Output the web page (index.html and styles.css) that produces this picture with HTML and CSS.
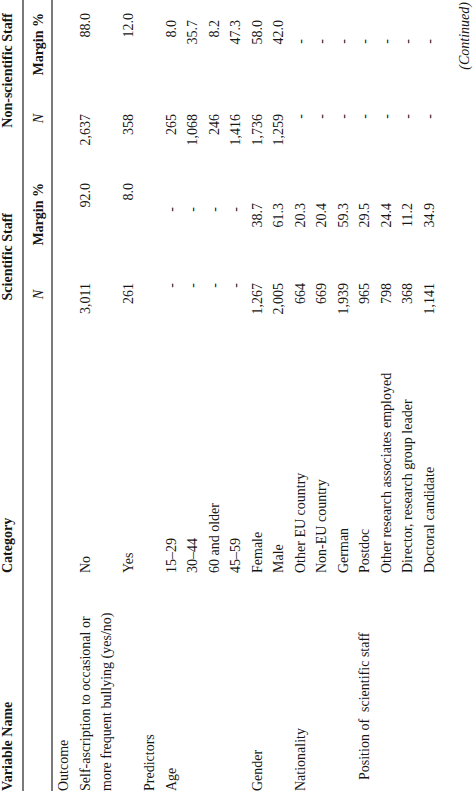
FILE: index.html
```html
<!DOCTYPE html>
<html lang="en">
<head>
<meta charset="utf-8">
<title>Table</title>
<link rel="stylesheet" href="styles.css">
</head>
<body>
<div class="page">
  <table class="tbl">
    <colgroup>
      <col class="c-var"><col class="c-cat"><col class="c-sn"><col class="c-sm"><col class="c-nn"><col class="c-nm"><col class="c-fill">
    </colgroup>
    <thead>
      <tr class="h1">
        <th class="l">Variable Name</th>
        <th class="l">Category</th>
        <th colspan="2" class="span-sci">Scientific Staff</th>
        <th colspan="2" class="span-non">Non-scientific Staff</th>
        <th></th>
      </tr>
      <tr class="h2">
        <th></th>
        <th></th>
        <th class="hn-sci"><i>N</i></th>
        <th class="r">Margin %</th>
        <th class="r"><i>N</i></th>
        <th class="r">Margin %</th>
        <th></th>
      </tr>
    </thead>
    <tbody>
      <tr><td>Outcome</td><td></td><td></td><td></td><td></td><td></td><td></td></tr>
      <tr class="o"><td>Self-ascription to occasional or<br>more frequent bullying (yes/no)</td><td>No</td><td class="n">3,011</td><td class="m">92.0</td><td class="n">2,637</td><td class="m2">88.0</td><td></td></tr>
      <tr class="o"><td></td><td>Yes</td><td class="n">261</td><td class="m">8.0</td><td class="n">358</td><td class="m2">12.0</td><td></td></tr>
      <tr><td>Predictors</td><td></td><td></td><td></td><td></td><td></td><td></td></tr>
      <tr class="p"><td>Age</td><td>15–29</td><td class="n">-</td><td class="m d">-</td><td class="n">265</td><td class="m2">8.0</td><td></td></tr>
      <tr class="p"><td></td><td>30–44</td><td class="n">-</td><td class="m d">-</td><td class="n">1,068</td><td class="m2">35.7</td><td></td></tr>
      <tr class="p"><td></td><td>60 and older</td><td class="n">-</td><td class="m d">-</td><td class="n">246</td><td class="m2">8.2</td><td></td></tr>
      <tr class="p"><td></td><td>45–59</td><td class="n">-</td><td class="m d">-</td><td class="n">1,416</td><td class="m2">47.3</td><td></td></tr>
      <tr class="p"><td>Gender</td><td>Female</td><td class="n">1,267</td><td class="m">38.7</td><td class="n">1,736</td><td class="m2">58.0</td><td></td></tr>
      <tr class="p"><td></td><td>Male</td><td class="n">2,005</td><td class="m">61.3</td><td class="n">1,259</td><td class="m2">42.0</td><td></td></tr>
      <tr class="p"><td>Nationality</td><td>Other EU country</td><td class="n">664</td><td class="m">20.3</td><td class="n">-</td><td class="m2 d">-</td><td></td></tr>
      <tr class="p"><td></td><td>Non-EU country</td><td class="n">669</td><td class="m">20.4</td><td class="n">-</td><td class="m2 d">-</td><td></td></tr>
      <tr class="p"><td></td><td>German</td><td class="n">1,939</td><td class="m">59.3</td><td class="n">-</td><td class="m2 d">-</td><td></td></tr>
      <tr class="p"><td class="pos">Position of&nbsp; scientific staff</td><td>Postdoc</td><td class="n">965</td><td class="m">29.5</td><td class="n">-</td><td class="m2 d">-</td><td></td></tr>
      <tr class="p"><td></td><td>Other research associates employed</td><td class="n">798</td><td class="m">24.4</td><td class="n">-</td><td class="m2 d">-</td><td></td></tr>
      <tr class="p"><td></td><td>Director, research group leader</td><td class="n">368</td><td class="m">11.2</td><td class="n">-</td><td class="m2 d">-</td><td></td></tr>
      <tr class="p"><td></td><td>Doctoral candidate</td><td class="n">1,141</td><td class="m">34.9</td><td class="n">-</td><td class="m2 d">-</td><td></td></tr>
    </tbody>
  </table>
  <div class="cont"><i>(Continued)</i></div>
</div>
</body>
</html>
```
FILE: styles.css
```css
html, body {
  margin: 0;
  padding: 0;
  background: #ffffff;
  overflow: hidden;
}
body {
  width: 474px;
  height: 791px;
}
.page {
  width: 791px;
  height: 474px;
  transform-origin: 0 0;
  transform: translateY(791px) rotate(-90deg);
  font-family: "Liberation Serif", "Times New Roman", serif;
  font-size: 14px;
  color: #161616;
  background: #ffffff;
  overflow: hidden;
}
.tbl {
  border-collapse: collapse;
  table-layout: fixed;
  width: 791px;
  margin-left: 0;
}
.c-var { width: 218px; }
.c-cat { width: 252px; }
.c-sn { width: 38px; }
.c-sm { width: 100px; }
.c-nn { width: 69px; }
.c-nm { width: 101px; }
.c-fill { width: 13px; }

th, td {
  padding: 0;
  white-space: nowrap;
  vertical-align: top;
}
th {
  font-weight: bold;
  line-height: 16px;
}
th.l { text-align: left; }
th.r { text-align: right; }
.h1 th {
  height: 16px;
  padding-bottom: 6px;
  border-bottom: 2px solid #7a7a7a;
}
.h2 th {
  height: 16px;
  padding-top: 7px;
  padding-bottom: 4px;
  border-bottom: 2px solid #7a7a7a;
}
.h2 th i { font-weight: normal; }
.span-sci { text-align: right; padding-right: 30px; }
.span-non { text-align: right; }
.hn-sci { text-align: right; padding-right: 7px; }

td {
  line-height: 21.5px;
  height: 21.5px;
}
td.n { text-align: right; }
td.m { text-align: right; }
td.m2 { text-align: right; }
tr.p td.m { padding-right: 20px; }
tr.p td.m.d { padding-right: 24px; }
tr.p td.m2 { padding-right: 7px; }
tr.p td.m2.d { padding-right: 26px; }
td.pos { padding-left: 11px; }

.cont {
  text-align: right;
  line-height: 16px;
  margin-top: 17px;
  margin-right: 2px;
}
```
